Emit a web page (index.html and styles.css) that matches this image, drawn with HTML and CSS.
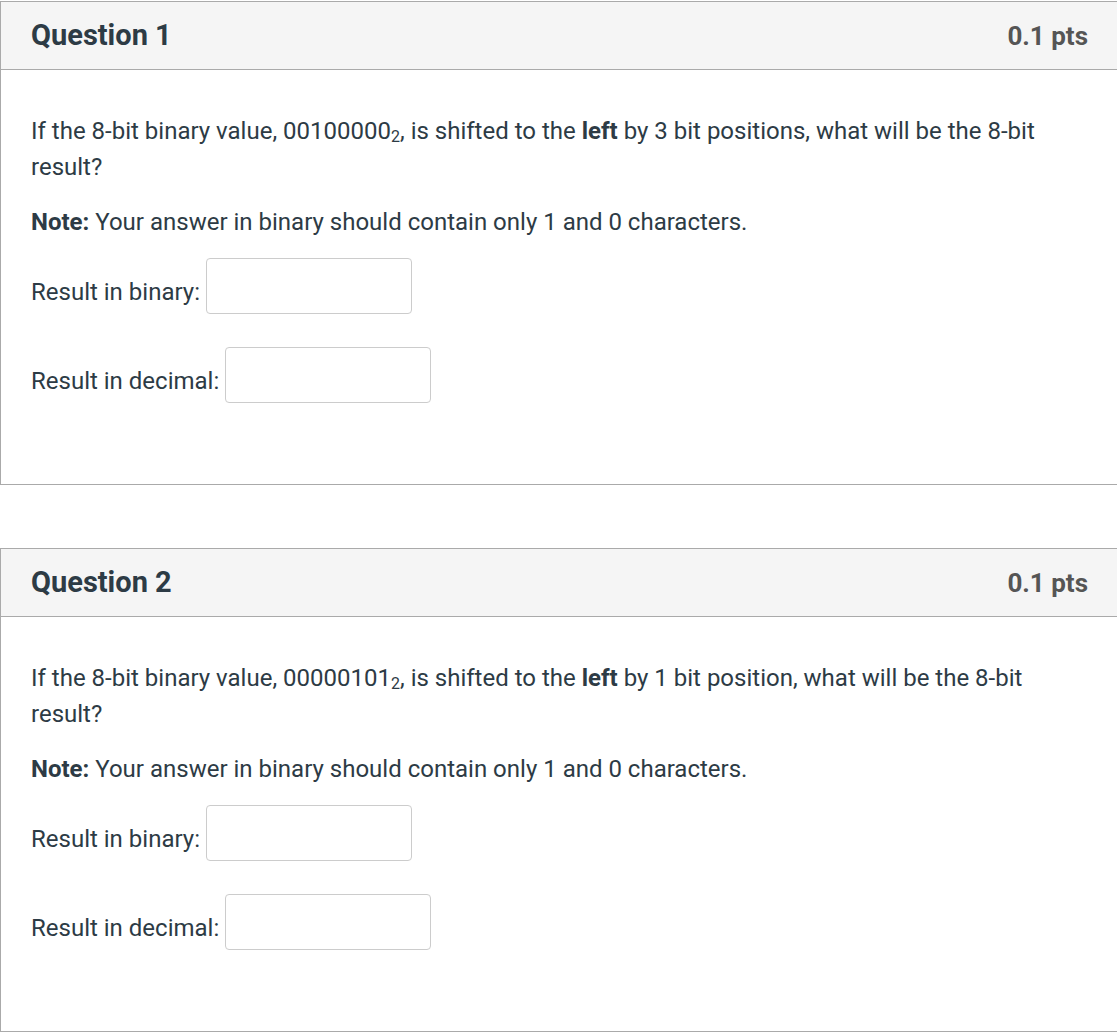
FILE: index.html
```html
<!DOCTYPE html>
<html lang="en">
<head>
    <meta charset="UTF-8">
    <meta name="viewport" content="width=device-width, initial-scale=1.0">
    <title>Quiz</title>
    <link rel="stylesheet" href="styles.css">
</head>
<body>
    <div id="quiz">
        <div class="question">
            <div class="question-header">
                <span class="question-title">Question 1</span>
                <span class="question-points">0.1 pts</span>
            </div>
            <div class="question-body">
                <p>If the 8-bit binary value, 00100000<sub>2</sub>, is shifted to the <strong>left</strong> by 3 bit positions, what will be the 8-bit result?</p>
                <p class="note"><strong>Note:</strong> Your answer in binary should contain only 1 and 0 characters.</p>
                <div class="answer-row">
                    <label for="q1-binary">Result in binary:</label>
                    <input type="text" id="q1-binary" class="answer-input">
                </div>
                <div class="answer-row">
                    <label for="q1-decimal">Result in decimal:</label>
                    <input type="text" id="q1-decimal" class="answer-input">
                </div>
            </div>
        </div>

        <div class="question">
            <div class="question-header">
                <span class="question-title">Question 2</span>
                <span class="question-points">0.1 pts</span>
            </div>
            <div class="question-body">
                <p>If the 8-bit binary value, 00000101<sub>2</sub>, is shifted to the <strong>left</strong> by 1 bit position, what will be the 8-bit result?</p>
                <p class="note"><strong>Note:</strong> Your answer in binary should contain only 1 and 0 characters.</p>
                <div class="answer-row">
                    <label for="q2-binary">Result in binary:</label>
                    <input type="text" id="q2-binary" class="answer-input">
                </div>
                <div class="answer-row">
                    <label for="q2-decimal">Result in decimal:</label>
                    <input type="text" id="q2-decimal" class="answer-input">
                </div>
            </div>
        </div>
    </div>
</body>
</html>
```

FILE: styles.css
```css
body {
    font-family: Roboto, "Liberation Sans", sans-serif;
    color: #2d3b45;
    margin: 0;
    padding: 0;
    overflow: hidden;
}
#quiz {
    padding-top: 1px;
}
.question {
    border: 1px solid #aaaaaa;
    margin: 0 -1px 63px 0;
    background-color: #ffffff;
}
.question:last-child {
    margin-bottom: 0;
}
.question-header {
    display: flex;
    justify-content: space-between;
    align-items: center;
    height: 67px;
    padding: 0 29px 0 30px;
    background-color: #f5f5f5;
    border-bottom: 1px solid #aaaaaa;
}
.question-title {
    font-size: 29px;
    font-weight: bold;
    margin-top: -1px;
}
.question-points {
    font-size: 26px;
    font-weight: bold;
    color: #555555;
}
.question-body {
    height: 414px;
    padding: 43px 32px 0 30px;
    box-sizing: border-box;
    font-size: 24px;
    line-height: 36px;
}
.question-body p {
    margin: 0 0 19px 0;
}
.question-body p.note {
    margin-bottom: 18px;
}
.question-body sub {
    font-size: 16px;
    line-height: 0;
    vertical-align: -3px;
}
.answer-row {
    display: flex;
    align-items: flex-end;
    gap: 6px;
    margin: 0 0 33px 0;
}
.answer-row label {
    margin-bottom: 4px;
}
.answer-input {
    width: 206px;
    height: 56px;
    box-sizing: border-box;
    border: 1px solid #cccccc;
    border-radius: 4px;
    padding: 4px 10px;
    font-family: inherit;
    font-size: 24px;
}
```
